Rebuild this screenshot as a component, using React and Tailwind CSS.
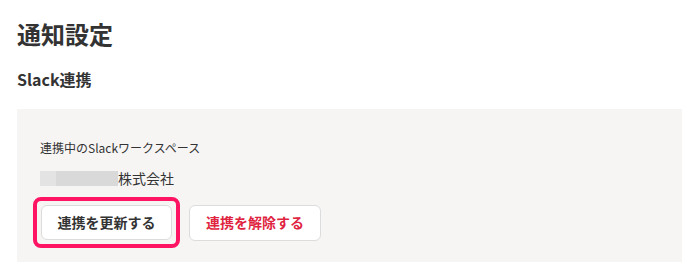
import React from "react";

const App = () => {
  return (
    <div
      className="pl-[17px] pt-[18px] bg-white text-[#333] w-[682px] h-[275px]"
      style={{ fontFamily: '"Noto Sans CJK JP", "Noto Sans", sans-serif' }}
    >
      {/* Page title */}
      <h1 className="text-[24px] font-bold leading-[32px]">通知設定</h1>
      <h2 className="mt-[17px] text-[16px] font-bold leading-[24px]">Slack連携</h2>

      {/* Slack panel */}
      <div className="mt-[18px] bg-[#f6f5f4] pl-[23px] pt-[30px] pb-[14px]">
        <p className="text-[12px] leading-[18px]">連携中のSlackワークスペース</p>
        <div className="mt-[11px] flex items-center h-[20px]">
          <span className="inline-block w-[16px] h-[15px] bg-[#e3e3e3]" />
          <span className="inline-block w-[62px] h-[15px] bg-[#d9d9d9]" />
          <span className="text-[14px] leading-[20px]">株式会社</span>
        </div>
        <div className="mt-[9px] ml-[-7px] flex items-center gap-[9px]">
          <div className="border-4 border-[#ff1463] rounded-[8px] p-[4px]">
            <button className="h-[35px] w-[131px] rounded-[6px] bg-white border border-[#dcdcdc] text-[14px] font-bold text-[#333]">
              連携を更新する
            </button>
          </div>
          <button className="h-[36px] w-[132px] rounded-[6px] bg-white border border-[#dcdcdc] text-[14px] font-bold text-[#e0243f]">
            連携を解除する
          </button>
        </div>
      </div>
    </div>
  );
};

export default App;
